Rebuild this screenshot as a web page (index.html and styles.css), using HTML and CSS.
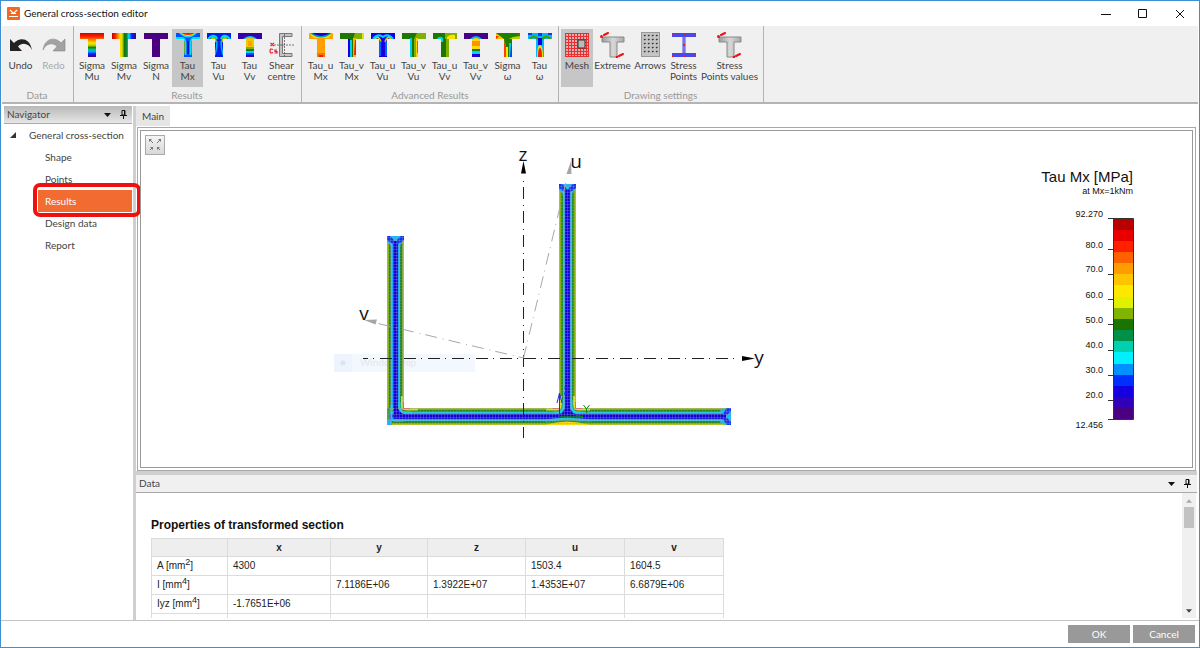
FILE: index.html
```html
<!DOCTYPE html>
<html lang="en">
<head>
<meta charset="utf-8">
<title>General cross-section editor</title>
<link rel="stylesheet" href="styles.css">
</head>
<body>
<svg class="defs" aria-hidden="true">
  <defs>
    <clipPath id="tee"><path d="M0 0H24V6H16V24H8V6H0Z"/></clipPath>
    <linearGradient id="rainV" x1="0" y1="0" x2="0" y2="1">
      <stop offset="0" stop-color="#d00000"/><stop offset=".15" stop-color="#ff2000"/><stop offset=".3" stop-color="#ff9000"/><stop offset=".42" stop-color="#ffe800"/><stop offset=".52" stop-color="#b0d000"/><stop offset=".6" stop-color="#1c8000"/><stop offset=".7" stop-color="#00c8a0"/><stop offset=".78" stop-color="#00a0ff"/><stop offset=".87" stop-color="#0020ff"/><stop offset="1" stop-color="#4b0082"/>
    </linearGradient>
    <linearGradient id="rainH">
      <stop offset="0" stop-color="#c00000"/><stop offset=".14" stop-color="#ff2000"/><stop offset=".25" stop-color="#ff9000"/><stop offset=".37" stop-color="#ffe800"/><stop offset=".44" stop-color="#b0d000"/><stop offset=".52" stop-color="#1c7000"/><stop offset=".62" stop-color="#009048"/><stop offset=".7" stop-color="#00e0ff"/><stop offset=".82" stop-color="#0020ff"/><stop offset="1" stop-color="#4b0082"/>
    </linearGradient>
    <linearGradient id="steel"><stop offset="0" stop-color="#9a9a9a"/><stop offset=".5" stop-color="#d8d8d8"/><stop offset="1" stop-color="#a8a8a8"/></linearGradient>
    <linearGradient id="wall">
      <stop offset="0" stop-color="#c4d420"/><stop offset=".09" stop-color="#7fb000"/><stop offset=".14" stop-color="#2c8410"/><stop offset=".21" stop-color="#1c8c30"/><stop offset=".25" stop-color="#20d0d8"/><stop offset=".31" stop-color="#20c8ff"/><stop offset=".35" stop-color="#1060ff"/><stop offset=".39" stop-color="#1400d8"/><stop offset=".61" stop-color="#1400d8"/><stop offset=".65" stop-color="#1060ff"/><stop offset=".69" stop-color="#20c8ff"/><stop offset=".75" stop-color="#20d0d8"/><stop offset=".79" stop-color="#1c8c30"/><stop offset=".86" stop-color="#2c8410"/><stop offset=".91" stop-color="#7fb000"/><stop offset="1" stop-color="#c4d420"/>
    </linearGradient>
    <linearGradient id="slab" href="#wall" x1="0" y1="0" x2="0" y2="1"/>
    <pattern id="grid" width="3" height="3" patternUnits="userSpaceOnUse"><path d="M0 .5H3M.5 0V3" stroke="#9a9ab8" stroke-opacity=".3" stroke-width="1" fill="none"/></pattern>
    <symbol id="pin" viewBox="0 0 7 9"><path d="M2 .5H5V5H2ZM4.500 .5V5M0 5.500H7M3.500 5.500V9" fill="none" stroke="#111"/></symbol>
    <symbol id="down" viewBox="0 0 7 4"><path d="M0 0H7L3.500 4Z" fill="currentColor"/></symbol>
    <symbol id="extreme" viewBox="0 0 26 26">
      <path d="M2 5H24V10H17V25H10V10H2Z" fill="url(#steel)" stroke="#8a8a8a"/>
      <path d="M4 3 8 1M19 24 23 22" stroke="#f01010" stroke-width="2" stroke-linecap="round"/><circle cx="1.500" cy="4.500" r="1.500" fill="#f01010"/><circle cx="17" cy="25" r="1.300" fill="#f01010"/>
    </symbol>
  </defs>
</svg>
<div class="window">
  <header class="titlebar">
    <svg class="app-icon" viewBox="0 0 13 13"><rect width="13" height="13" rx="1" fill="#f26a21"/><path d="M2 9.500H11M3 3 6.500 6.500 10 3M4 6.500H9" fill="none" stroke="#fff" stroke-width="1.200"/></svg>
    <h1 class="title">General cross-section editor</h1>
    <div class="window-controls">
      <button class="window-button" aria-label="Minimize"><svg viewBox="0 0 10 10"><path d="M0 5.500H10" stroke="#111"/></svg></button>
      <button class="window-button" aria-label="Maximize"><svg viewBox="0 0 10 10"><path d="M.5 .5H8.500V8.500H.5Z" fill="none" stroke="#111"/></svg></button>
      <button class="window-button" aria-label="Close"><svg viewBox="0 0 10 10"><path d="M1 1 9 9M9 1 1 9" stroke="#111"/></svg></button>
    </div>
  </header>

  <div class="ribbon">
    <section class="group">
      <div class="tools">
        <button class="tool wide"><svg class="icon" viewBox="0 0 26 26"><path transform="translate(2 6)" d="M0 1 4 5C9 -1 20 -1 22 12C19 5 12 4 8 8.500L12 13H0Z" fill="#222"/></svg>Undo</button>
        <button class="tool wide" disabled><svg class="icon" viewBox="0 0 26 26"><path transform="translate(24 6) scale(-1 1)" d="M0 1 4 5C9 -1 20 -1 22 12C19 5 12 4 8 8.500L12 13H0Z" fill="#a2a2a2" stroke="#888" stroke-width=".6"/></svg>Redo</button>
      </div>
      <h2 class="group-name">Data</h2>
    </section>
    <section class="group">
      <div class="tools">
        <button class="tool sigma"><svg class="icon" viewBox="-1 -1 26 26"><g clip-path="url(#tee)"><rect width="24" height="24" fill="url(#rainV)"/></g></svg>Sigma<br>Mu</button>
        <button class="tool sigma"><svg class="icon" viewBox="-1 -1 26 26"><g clip-path="url(#tee)"><rect width="24" height="24" fill="url(#rainH)"/></g></svg>Sigma<br>Mv</button>
        <button class="tool sigma"><svg class="icon" viewBox="-1 -1 26 26"><g clip-path="url(#tee)"><rect width="24" height="24" fill="#4b0082"/></g></svg>Sigma<br>N</button>
        <button class="tool selected"><svg class="icon" viewBox="-1 -1 26 26"><g clip-path="url(#tee)"><rect width="24" height="24" fill="#0050ff"/><path d="M3 0Q12 9 21 0Z" fill="#00e0f0"/><path d="M4 0Q12 6 20 0Z" fill="#ffe800"/><path d="M5 0Q12 4 19 0Z" fill="#f02000"/><path d="M0 5H7Q9.500 6 9.500 11V22M24 5H17Q14.500 6 14.500 11V22" fill="none" stroke="#00e0ff" stroke-width="1.800"/><path d="M8.300 8V20M15.700 8V20" stroke="#80b000" stroke-width="1"/><path d="M12 8V21" stroke="#2000c0" stroke-width="1.600"/></g></svg>Tau<br>Mx</button>
        <button class="tool"><svg class="icon" viewBox="-1 -1 26 26"><g clip-path="url(#tee)"><rect width="24" height="24" fill="#0020e8"/><path d="M1 6Q5 1 9 4L10 6M23 6Q19 1 15 4L14 6" fill="none" stroke="#00d8ff" stroke-width="2"/><path d="M4 6Q8 3 9 9M20 6Q16 3 15 9" fill="none" stroke="#a0d000" stroke-width="2"/><path d="M10 8Q10 15 8 22M14 8Q14 15 16 22" fill="none" stroke="#00b0ff" stroke-width="1.500"/></g></svg>Tau<br>Vu</button>
        <button class="tool"><svg class="icon" viewBox="-1 -1 26 26"><g clip-path="url(#tee)"><rect width="24" height="24" fill="#3800a8"/><path d="M5 6Q12 0 19 6V9H5Z" fill="#00c8ff"/><path d="M7 6Q12 3 17 6V14H7Z" fill="#f0c800"/><path d="M10 8H14V13H10Z" fill="#ffa000"/><path d="M7 14H17V16H7Z" fill="#80b000"/><path d="M7 16H17V18H7Z" fill="#108020"/><path d="M7 18H17V20H7Z" fill="#00d0ff"/><path d="M7 20H17V22H7Z" fill="#0040ff"/></g></svg>Tau<br>Vv</button>
        <button class="tool broad"><svg class="icon" viewBox="0 0 26 26"><path d="M23 1.500H10.500V24.500H23V21.500H13.500V4.500H23Z" fill="#c4c4c4" stroke="#777"/><path d="M5 13H26M15.500 2V25" stroke="#555" stroke-width=".8" stroke-dasharray="2 1"/><path d="M1.500 11 5 14M5 11 1.500 14M4 17.500Q1 16 1 19Q1 22 4 20.500M8 18H6V19.500H8V21H5.500" fill="none" stroke="#f01828" stroke-width="1.200"/></svg>Shear<br>centre</button>
      </div>
      <h2 class="group-name">Results</h2>
    </section>
    <section class="group advanced">
      <div class="tools">
        <button class="tool"><svg class="icon" viewBox="-1 -1 26 26"><g clip-path="url(#tee)"><rect width="24" height="24" fill="#ffa000"/><path d="M0 0H24L19 5H5Z" fill="#e8e800"/><path d="M1 0H23Q12 9 1 0Z" fill="#00a0a0"/><path d="M3 0H21Q12 6 3 0Z" fill="#1800d0"/><path d="M8 20H16V24H8Z" fill="#ff7000"/><path d="M10 22H14V24H10Z" fill="#f02000"/></g></svg>Tau_u<br>Mx</button>
        <button class="tool"><svg class="icon" viewBox="-1 -1 26 26"><g clip-path="url(#tee)"><rect width="24" height="24" fill="#1c7800"/><path d="M15 0H24V6H13Z" fill="#80b000"/><path d="M22 0H24V6H22Z" fill="#e8e000"/><path d="M8 6H10V24H8Z" fill="#1000d8"/><path d="M10 7H12V24H10Z" fill="#00d0ff"/><path d="M13 5H16V24H13Z" fill="#ffb000"/><path d="M15 7H16V22H14Z" fill="#f02000"/></g></svg>Tau_v<br>Mx</button>
        <button class="tool"><svg class="icon" viewBox="-1 -1 26 26"><g clip-path="url(#tee)"><rect width="24" height="24" fill="#1800e0"/><path d="M2 6Q7 0 12 4Q17 0 22 6" fill="none" stroke="#00d0ff" stroke-width="2"/><path d="M4 6Q8 2 10 9M20 6Q16 2 14 9" fill="none" stroke="#d0d800" stroke-width="1.600"/><path d="M9 8V23M15 8V23" stroke="#0080ff" stroke-width="1.600"/></g></svg>Tau_u<br>Vu</button>
        <button class="tool"><svg class="icon" viewBox="-1 -1 26 26"><g clip-path="url(#tee)"><rect width="24" height="24" fill="#1c7800"/><path d="M15 0H24V6H12Z" fill="#80b000"/><path d="M8 5H10V24H8Z" fill="#00d0f0"/><path d="M12 6H14V24H12Z" fill="#80b000"/><path d="M14 5H16V24H14Z" fill="#ffd000"/><path d="M15 8H16V20H15Z" fill="#ff5000"/></g></svg>Tau_v<br>Vu</button>
        <button class="tool"><svg class="icon" viewBox="-1 -1 26 26"><g clip-path="url(#tee)"><rect width="24" height="24" fill="#1c7800"/><path d="M4 6Q6 2 10 5V9H8V6Z" fill="#00d8f0"/><path d="M12 0H24V6H12Z" fill="#80b000"/><path d="M14 4Q17 1 22 2V6H14Z" fill="#ffe000"/><path d="M13 6H16V24H13Z" fill="#80b000"/></g></svg>Tau_u<br>Vv</button>
        <button class="tool"><svg class="icon" viewBox="-1 -1 26 26"><g clip-path="url(#tee)"><rect width="24" height="24" fill="#480088"/><path d="M6 6Q12 0 18 6V9H6Z" fill="#00b8ff"/><path d="M7 7Q12 3 17 7V17H7Z" fill="#ffd800"/><path d="M8 8H16V13H8Z" fill="#ff9000"/><path d="M7 16H17V18H7Z" fill="#108020"/><path d="M7 18H17V21H7Z" fill="#00d0ff"/><path d="M7 21H17V24H7Z" fill="#2000d0"/></g></svg>Tau_v<br>Vv</button>
        <button class="tool broad"><svg class="icon" viewBox="-1 -1 26 26"><g clip-path="url(#tee)"><rect width="24" height="24" fill="#1c8000"/><path d="M0 0 8 6 10 24H8L0 5Z" fill="#ffc000"/><path d="M0 3H3L0 6ZM24 0V2L21 3Z" fill="#ff3000"/><path d="M24 3V6H13L17 4Z" fill="#c0d000"/><path d="M8 10H10V24H8Z" fill="#ff4000"/><path d="M10 14H12V24H10Z" fill="#ffe000"/><path d="M13 10H15V24H13Z" fill="#00c8f0"/><path d="M15 13H16V24H14Z" fill="#0040ff"/></g></svg>Sigma<br>ω</button>
        <button class="tool"><svg class="icon" viewBox="-1 -1 26 26"><g clip-path="url(#tee)"><rect width="24" height="24" fill="#00b8ff"/><path d="M0 0H4V2H0ZM20 0H24V2H20ZM10 0H14V3H10Z" fill="#0040f0"/><path d="M2 6Q5 1 10 6M22 6Q19 1 14 6" fill="none" stroke="#40a000" stroke-width="2.400"/><path d="M10 5H14V12H10Z" fill="#1000d8"/><path d="M9 24Q9 12 12 12Q15 12 15 24" fill="#e8e000"/><path d="M10 24Q10 15 12 15Q14 15 14 24" fill="#f02000"/></g></svg>Tau<br>ω</button>
      </div>
      <h2 class="group-name">Advanced Results</h2>
    </section>
    <section class="group">
      <div class="tools">
        <button class="tool sigma selected"><svg class="icon" viewBox="0 0 26 26"><rect x="1" y="1" width="24" height="24" fill="#dfaeae"/><path d="M1 1.500H25M1 4.500H25M1 7.500H25M1 10.500H25M1 13.500H25M1 16.500H25M1 19.500H25M1 22.500H25M1 24.500H25M1.500 1V25M4.500 1V25M7.500 1V25M10.500 1V25M13.500 1V25M16.500 1V25M19.500 1V25M22.500 1V25M24.500 1V25" stroke="#e83030"/><rect x="14" y="8" width="7" height="8" fill="#bbb" stroke="#333"/></svg>Mesh</button>
        <button class="tool extreme"><svg class="icon"><use href="#extreme"/></svg>Extreme</button>
        <button class="tool arrows"><svg class="icon" viewBox="0 0 26 26"><rect x="4.500" y=".5" width="18" height="24" fill="#c4c4c4" stroke="#999"/><path d="M7 4 8.500 3M11 4 12.500 3M15 4 16.500 3M19 4 20.500 3M7 8 8.500 7M11 8 12.500 7M15 8 16.500 7M19 8 20.500 7M7 12 8.500 11M11 12 12.500 11M15 12 16.500 11M19 12 20.500 11M7 16 8.500 15M11 16 12.500 15M15 16 16.500 15M19 16 20.500 15M7 20 8.500 19M11 20 12.500 19M15 20 16.500 19M19 20 20.500 19" stroke="#333" stroke-width="1.500"/></svg>Arrows</button>
        <button class="tool"><svg class="icon" viewBox="0 0 26 26"><path d="M1 1H25V5H14.500V21H25V25H1V21H11.500V5H1Z" fill="#4a48e8"/><path d="M13 5V21" stroke="#a0a0f0"/><path d="M1 1h1.500v1.500H1ZM12 1h2v1.500H12ZM23.500 1H25v1.500H23.500ZM1 23.500H2.500V25H1ZM12 23.500h2V25H12ZM23.500 23.500H25V25H23.500ZM12 12h2v2H12Z" fill="#f01818"/></svg>Stress<br>Points</button>
        <button class="tool values"><svg class="icon"><use href="#extreme"/></svg>Stress<br>Points values</button>
      </div>
      <h2 class="group-name">Drawing settings</h2>
    </section>
  </div>

  <main class="main">
    <nav class="navigator">
      <div class="panel-head nav-head"><span class="panel-name">Navigator</span><svg class="down"><use href="#down"/></svg><svg class="pin"><use href="#pin"/></svg></div>
      <a class="nav-item root" href="#"><svg class="twisty" viewBox="0 0 6 6"><path d="M6 0V6H0Z" fill="#333"/></svg>General cross-section</a>
      <a class="nav-item" href="#">Shape</a>
      <a class="nav-item" href="#">Points</a>
      <a class="nav-item current" href="#">Results<span class="callout"></span></a>
      <a class="nav-item" href="#">Design data</a>
      <a class="nav-item" href="#">Report</a>
    </nav>
    <div class="work">
      <div class="tabs"><button class="tab">Main</button></div>
      <div class="view-frame">
        <div class="view">
          <button class="fit" aria-label="Zoom to fit"><svg viewBox="0 0 18 18"><path d="M4 4 7 7M14 4 11 7M4 14 7 11M14 14 11 11" stroke="#777"/><path d="M3 3H6L3 6ZM15 3H12L15 6ZM7 14V11L4 11ZM11 14V11L14 11Z" fill="#777"/></svg></button>
          <svg class="drawing" viewBox="141 132 1051 334">
            <g class="ghost"><rect x="334" y="354" width="141" height="18" fill="#f3f8fe"/><rect x="334" y="354" width="18" height="18" fill="#edf4fd"/><circle cx="343" cy="363" r="2.500" fill="#e2e4e8"/><text x="360" y="366">WindowSnip</text></g>
            <rect x="387" y="236" width="17" height="184" fill="url(#wall)"/>
            <rect x="387" y="408" width="344" height="17" fill="url(#slab)"/>
            <rect x="559" y="184" width="17" height="226" fill="url(#wall)"/>
            <path d="M393.500 405H397.500Q398 413 405 414.500V418.500H396Q393.500 418 393.500 415Z" fill="#1400d8"/>
            <path d="M387 408V425H389L390 418V408Z" fill="#38a040"/>
            <path d="M391.500 405V418Q392 420.500 395 420.500H404" fill="none" stroke="#20c8f0" stroke-width="2"/>
            <path d="M399.500 402V408Q401 412.500 405 412.500H412" fill="none" stroke="#20d0e8" stroke-width="2"/>
            <path d="M402 396V407Q403 409.500 407 409.500H418" fill="none" stroke="#d8e020" stroke-width="2"/>
            <path d="M403.500 402V408.500H410" fill="none" stroke="#ff6050" stroke-width="1"/>
            <path d="M387 419H392V425H387Z" fill="#20b0ff"/>
            <path d="M565.500 405H569.500Q570 414 578 414.500V419H557V414.500Q565 414 565.500 405Z" fill="#1400d8"/>
            <path d="M554 412.500H558Q563.500 411 563.500 406V400M581 412.500H577Q571.500 411 571.500 406V400" fill="none" stroke="#20d0e8" stroke-width="2"/>
            <path d="M546 409.500H557Q561 409 561 404V396M590 409.500H578Q574 409 574 404V396" fill="none" stroke="#e8e020" stroke-width="2"/>
            <path d="M553 408.500H559.500V402M582 408.500H575.500V402" fill="none" stroke="#ff6050"/>
            <path d="M545 425Q567 418 590 425Z" fill="#ffe000"/>
            <path d="M545 423Q567 418 590 423" fill="none" stroke="#409820"/><path d="M545 420.500Q567 417 590 420.500" fill="none" stroke="#20c8e0" stroke-width="2"/>
            <path d="M387 236H404V239L400 246V241H391V246L387 242ZM559 184H576V188L572 194V189H563V194L559 190ZM731 408V425H726L719 422L726 419V414L719 411L726 408Z" fill="#20b8f0"/>
            <path d="M387 236H390L394 240V244L391 243L387 240ZM404 236H401L397 240V244L400 243L404 240ZM559 184H562L566 188V192L563 191L559 188ZM576 184H573L569 188V192L572 191L576 188ZM731 408V411L727 415H723L724 412L727 408ZM731 425V422L727 418H723L724 421L727 425Z" fill="#1830f0"/>
            <path d="M387 236H404V408H559V184H576V408H731V425H387Z" fill="url(#grid)"/>
            <g fill="none" stroke="#222" stroke-width="1"><path d="M523.500 438V176" stroke-dasharray="12 5 1 6" stroke-dashoffset="1"/><path d="M363 358.500H740" stroke-dasharray="12 5 1 6" stroke-dashoffset="7"/></g>
            <g fill="none" stroke="#a8a8a8"><path d="M523.500 358 567 178" stroke-dasharray="12 5 1 6"/><path d="M523.500 358 376 323" stroke-dasharray="12 5 1 6" stroke-dashoffset="7"/></g>
            <path d="M523.500 161 526 173.500H521ZM755 358.500 742 361V356Z" fill="#000"/>
            <path d="M571 161 571.500 174H566.500ZM364 320 377 319.500 375.500 324.500Z" fill="#a6a6a6"/>
            <path d="M559.500 418V394M557 403 559.500 393 562 403" fill="none" stroke="#2828f0"/><path d="M560 416.500H583M575 415 583 416.500 575 418" fill="none" stroke="#108020" stroke-width=".8"/>
            <path d="M564 388H569L564 394H569" fill="none" stroke="#2828f0" stroke-width=".8"/><path d="M583.500 405 586.500 409 589.500 405M586.500 409V413" fill="none" stroke="#108020"/>
            <g class="axis-name"><text x="523" y="161">z</text><text x="576" y="168">u</text><text x="364" y="320">v</text><text x="759" y="364">y</text></g>
            <text class="legend-title" x="1133" y="182">Tau Mx [MPa]</text>
            <g class="legend-text"><text x="1133" y="194">at Mx=1kNm</text><text x="1103" y="217">92.270</text><text x="1103" y="248">80.0</text><text x="1103" y="272">70.0</text><text x="1103" y="298">60.0</text><text x="1103" y="323">50.0</text><text x="1103" y="348">40.0</text><text x="1103" y="373">30.0</text><text x="1103" y="398">20.0</text><text x="1103" y="428">12.456</text></g>
            <g>
              <path fill="#b80000" d="M1114 218h19v12h-19z"/><path fill="#e80000" d="M1114 230h19v11h-19z"/><path fill="#ff2000" d="M1114 241h19v11h-19z"/><path fill="#ff6000" d="M1114 252h19v11h-19z"/><path fill="#ff9c00" d="M1114 263h19v11h-19z"/><path fill="#ffc400" d="M1114 274h19v11h-19z"/><path fill="#ffe800" d="M1114 285h19v12h-19z"/><path fill="#e0f000" d="M1114 297h19v11h-19z"/><path fill="#80b400" d="M1114 308h19v11h-19z"/><path fill="#1c7400" d="M1114 319h19v11h-19z"/><path fill="#009048" d="M1114 330h19v11h-19z"/><path fill="#00d0b0" d="M1114 341h19v11h-19z"/><path fill="#00f0ff" d="M1114 352h19v12h-19z"/><path fill="#0090ff" d="M1114 364h19v11h-19z"/><path fill="#0030ff" d="M1114 375h19v11h-19z"/><path fill="#1400e0" d="M1114 386h19v11h-19z"/><path fill="#3000b8" d="M1114 397h19v11h-19z"/><path fill="#4b0082" d="M1114 408h19v11h-19z"/>
              <path d="M1108 218.500H1133.500V419.500H1108M1113.500 218V419M1108 249.500H1113M1108 274.500H1113M1108 299.500H1113M1108 324.500H1113M1108 350.500H1113M1108 375.500H1113M1108 400.500H1113" fill="none" stroke="#333"/>
            </g>
          </svg>
        </div>
      </div>
      <section class="data">
        <div class="panel-head data-head"><span class="panel-name">Data</span><svg class="down"><use href="#down"/></svg><svg class="pin"><use href="#pin"/></svg></div>
        <div class="data-body">
          <div class="report">
            <h2 class="report-title">Properties of transformed section</h2>
            <table class="props">
              <colgroup><col class="c-name"><col class="c-x"><col class="c-y"><col class="c-z"><col class="c-uv"><col class="c-uv"></colgroup>
              <thead><tr><th></th><th>x</th><th>y</th><th>z</th><th>u</th><th>v</th></tr></thead>
              <tbody>
                <tr><td>A [mm<sup>2</sup>]</td><td>4300</td><td></td><td></td><td>1503.4</td><td>1604.5</td></tr>
                <tr><td>I [mm<sup>4</sup>]</td><td></td><td>7.1186E+06</td><td>1.3922E+07</td><td>1.4353E+07</td><td>6.6879E+06</td></tr>
                <tr><td>Iyz [mm<sup>4</sup>]</td><td>-1.7651E+06</td><td></td><td></td><td></td><td></td></tr>
                <tr><td></td><td></td><td></td><td></td><td></td><td></td></tr>
              </tbody>
            </table>
          </div>
          <div class="scrollbar"><svg class="scroll-arrow up"><use href="#down"/></svg><div class="thumb"></div><svg class="scroll-arrow"><use href="#down"/></svg></div>
        </div>
      </section>
    </div>
  </main>

  <footer class="footer"><button class="action">OK</button><button class="action">Cancel</button></footer>
</div>
</body>
</html>
```

FILE: styles.css
```css
* { box-sizing: border-box; }
body { margin: 0; font: 10px/11px Lato, "Open Sans", sans-serif; color: #444; background: #fff; }
button { font: inherit; color: inherit; border: 0; padding: 0; background: none; }
h1, h2 { margin: 0; font: inherit; }
svg { display: block; }
.defs { position: absolute; width: 0; height: 0; }
.window { display: flex; flex-direction: column; height: 100vh; min-height: 480px; border: 1px solid #3c8fd0; }

.titlebar { display: flex; align-items: center; height: 25px; padding-left: 6px; gap: 4px; color: #111; }
.app-icon { width: 13px; height: 13px; }
.title { flex: 1; }
.window-controls { display: flex; padding-right: 1px; }
.window-button { display: grid; place-items: center; width: 37px; height: 22px; }
.window-button svg { width: 10px; height: 10px; }

.ribbon { display: flex; height: 78px; margin: 0 1px; background: #f0f0f0; border-bottom: 2px solid #b4b4b4; }
.group { display: flex; flex-direction: column; padding: 3px 3px 1px 2px; border-right: 1px solid #b4b4b4; }
.group.advanced { padding-left: 3px; }
.tools { display: flex; height: 58px; }
.tool { display: flex; flex-direction: column; align-items: center; width: 31px; height: 58px; padding-top: 3px; line-height: 11px; white-space: nowrap; }
.tool:disabled { color: #aaa; }
.tool.selected { background: #c6c6c6; }
.tool.wide { width: 33px; }
.tool.sigma { width: 32px; }
.tool.broad { width: 33px; }
.tool.extreme { width: 39px; }
.tool.arrows { width: 36px; }
.tool.values { width: 61px; }
.icon { width: 26px; height: 26px; margin-bottom: 2px; flex: none; }
.group-name { margin-top: auto; text-align: center; line-height: 12px; color: #999; }

.main { display: flex; flex: 1; min-height: 0; padding: 2px 2px 0 3px; }
.navigator { width: 128px; flex: none; }
.panel-head { display: flex; align-items: center; height: 18px; gap: 9px; }
.panel-name { flex: 1; }
.nav-head { padding: 0 5px 0 3px; background: linear-gradient(#b8b8b8, #e6e6e6); border-bottom: 1px solid #aaa; }
.down { width: 7px; height: 4px; color: #111; }
.pin { width: 7px; height: 9px; }
.nav-item { display: block; height: 22px; padding-left: 41px; line-height: 22px; color: #444; text-decoration: none; }
.nav-item.root { display: flex; align-items: center; gap: 13px; padding-left: 6px; }
.twisty { width: 6px; height: 6px; }
.nav-item.current { position: relative; margin-left: 34px; padding-left: 7px; color: #fff; background: #f26b30; }
.callout { position: absolute; inset: -7px -9px -5px -5px; border: 4px solid #f01010; border-radius: 7px; }

.work { display: flex; flex-direction: column; flex: 1; min-width: 0; margin-left: 1px; border-left: 3px solid #cfcfcf; }
.tabs { display: flex; height: 21px; }
.tab { height: 20px; padding: 0 6px; background: #e6e6e6; }
.view-frame { flex: 1; min-height: 0; margin: 0 1px; padding: 2px; border: 1px solid #a8a8a8; }
.view { position: relative; height: 100%; border: 1px solid #999; }
.fit { position: absolute; left: 4px; top: 4px; width: 20px; height: 20px; border: 1px solid #aaa; background: linear-gradient(#f4f4f4, #d8d8d8); }
.fit svg { width: 18px; height: 18px; }
.drawing { width: 100%; height: 100%; }
.ghost { font-size: 10px; fill: #e3e6ea; }
.axis-name { font: 19px "Open Sans", sans-serif; fill: #111; text-anchor: middle; }
.legend-title { font: 15px "Liberation Sans", sans-serif; fill: #111; text-anchor: end; }
.legend-text { font: 9px "Liberation Sans", sans-serif; fill: #111; text-anchor: end; }

.data { display: flex; flex-direction: column; flex: none; height: 149px; padding-bottom: 2px; border-top: 4px solid #cfcfcf; }
.data-head { height: 18px; padding: 0 6px 0 3px; background: #f0f0f0; border-bottom: 1px solid #aaa; }
.data-body { display: flex; flex: 1; min-height: 0; }
.report { flex: 1; overflow: hidden; padding: 25px 15px 0; color: #222; font-family: "Liberation Sans", sans-serif; }
.report-title { font-size: 12px; line-height: 14px; font-weight: bold; color: #111; }
.props { width: 572px; margin-top: 6px; border-collapse: collapse; table-layout: fixed; }
.c-name { width: 76px; }
.c-x { width: 103px; }
.c-y { width: 97px; }
.c-z { width: 98px; }
.c-uv { width: 99px; }
.props th { height: 18px; padding: 0; border: 1px solid #dcdcdc; background: #eee; }
.props td { height: 19px; padding: 0 5px; border: 1px solid #dcdcdc; line-height: 14px; }
.props sup { line-height: 0; font-size: 9px; }
.scrollbar { display: flex; flex-direction: column; align-items: center; width: 14px; margin-right: 1px; padding: 6px 0 5px; background: #f0f0f0; color: #444; }
.scroll-arrow { width: 6px; height: 4px; }
.scroll-arrow.up { transform: rotate(180deg); color: #aaa; }
.thumb { width: 10px; height: 21px; margin: 4px 0 auto; background: #c2c2c2; }

.footer { display: flex; justify-content: flex-end; gap: 3px; height: 27px; padding: 4px; border-top: 1px solid #c4c4c4; }
.action { width: 62px; color: #fff; background: #999; }
```
